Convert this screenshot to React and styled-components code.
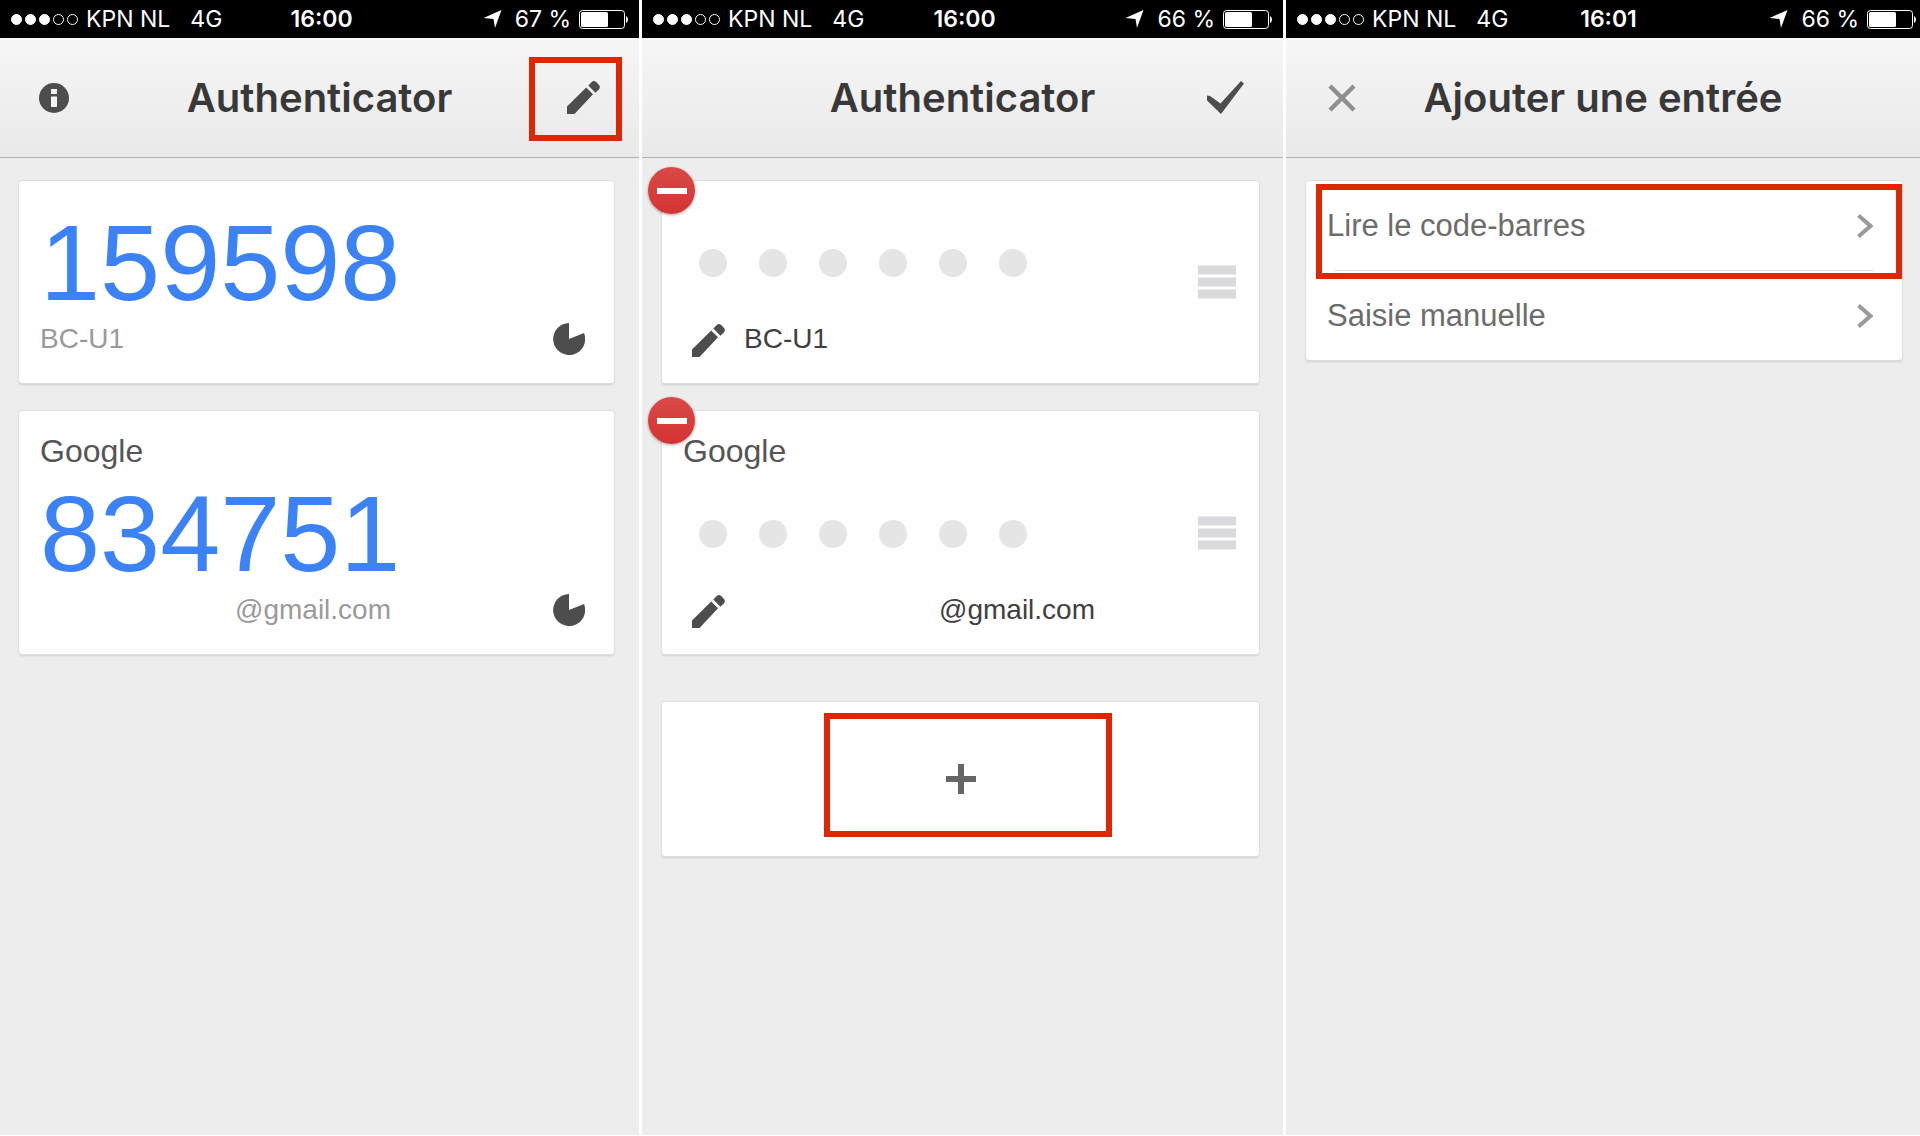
import React from 'react'
import styled, { createGlobalStyle } from 'styled-components'

const GlobalStyle = createGlobalStyle`
  * {
    box-sizing: border-box;
  }

  body {
    margin: 0;
    background-color: white;
    font-family: "Liberation Sans", Arial, sans-serif;
  }
`

const Page = styled.main`
  min-height: 100vh;
  padding-bottom: 1px;
  display: grid;
  grid-template-columns: 639fr 641fr 634fr;
  gap: 3px;
`

const Screen = styled.section`
  min-width: 0;
  display: flex;
  flex-direction: column;
  background-color: #ededed;
`

const StatusBar = styled.div`
  height: 38px;
  padding: 0 ${props => props.$edge}px 0 11px;
  display: grid;
  grid-template-columns: minmax(0, 1fr) auto minmax(0, 1fr);
  align-items: center;
  background-color: black;
  color: white;
  font-family: Inter, "Liberation Sans", sans-serif;
  font-size: 23px;
  line-height: 36px;
  white-space: nowrap;
`

const StatusGroup = styled.div`
  display: flex;
  align-items: center;
  justify-content: ${props => (props.$end ? 'flex-end' : 'flex-start')};
  gap: 8px;
`

const Signal = styled.div`
  display: flex;
  gap: 3px;
`

const SignalDot = styled.span`
  width: 11px;
  height: 11px;
  border: 1px solid white;
  border-radius: 50%;
  background-color: ${props => (props.$on ? 'white' : 'transparent')};
`

const Network = styled.span`
  margin-left: 12px;
`

const Time = styled.span`
  padding-left: 4px;
  font-weight: 600;
`

const Header = styled.header`
  height: 120px;
  padding: 0 39px;
  display: grid;
  grid-template-columns: 1fr auto 1fr;
  align-items: center;
  background: linear-gradient(#f6f6f6, #e9e9e9);
  border-bottom: 1px solid #b2b2b2;
`

const Title = styled.h1`
  grid-column: 2;
  margin: 0;
  color: #383838;
  font-family: Inter, "Liberation Sans", sans-serif;
  font-size: 40px;
  font-weight: 600;
  line-height: 48px;
`

const IconButton = styled.button`
  position: relative;
  padding: 0;
  display: flex;
  justify-self: ${props => (props.$end ? 'end' : 'start')};
  border: 0;
  background: none;
  color: ${props => props.$color || '#4d4d4d'};
  cursor: pointer;
`

const Content = styled.div`
  padding: 23px ${props => props.$edge}px 28px ${props => props.$start || 20}px;
  display: flex;
  flex-direction: column;
  gap: 28px;
`

const Card = styled.article`
  position: relative;
  padding: ${props => (props.$issuer ? 20 : 28)}px 21px 26px;
  border-radius: 3px;
  background-color: #fefefe;
  box-shadow: 0 0 1px 1px #dfdfdf, 0 2px 2px #cfcfcf;
`

const Issuer = styled.div`
  margin-bottom: 9px;
  color: #555;
  font-size: 32px;
  line-height: 40px;
`

const Code = styled.div`
  height: 108px;
  display: flex;
  align-items: center;
  color: #3b82f7;
  font-size: 108px;
  line-height: 108px;
`

const HiddenDigit = styled.span`
  width: 60px;
  display: flex;
  justify-content: center;

  &::before {
    content: '';
    width: 28px;
    height: 28px;
    border-radius: 50%;
    background-color: #e5e5e5;
  }
`

const Footer = styled.div`
  margin-top: 4px;
  padding-right: ${props => (props.$editing ? 0 : 8)}px;
  padding-left: ${props => (props.$editing ? 9 : 0)}px;
  display: flex;
  align-items: ${props => (props.$editing ? 'flex-end' : 'center')};
  gap: 19px;
`

const Account = styled.span`
  flex: 1;
  padding-left: ${props => (props.$masked ? 195 : 0)}px;
  color: ${props => (props.$editing ? '#404040' : '#9a9a9a')};
  font-size: 28px;
  line-height: 36px;
`

const RemoveButton = styled.button`
  position: absolute;
  top: -14px;
  left: -14px;
  width: 47px;
  height: 47px;
  padding: 0;
  display: flex;
  align-items: center;
  justify-content: center;
  border: 0;
  border-radius: 50%;
  background: linear-gradient(#d94a46, #d43333);
  box-shadow: 0 1px 3px rgba(0, 0, 0, 0.35);
  cursor: pointer;

  &::before {
    content: '';
    width: 30px;
    height: 6px;
    background-color: white;
  }
`

const DragHandle = styled.button`
  position: absolute;
  top: 50%;
  right: 23px;
  width: 38px;
  padding: 0;
  display: flex;
  flex-direction: column;
  gap: 3px;
  transform: translateY(-50%);
  border: 0;
  background: none;
  cursor: grab;
`

const HandleBar = styled.span`
  height: 9px;
  background-color: #d9d9de;
`

const AddButton = styled.button`
  position: relative;
  height: 154px;
  margin-top: 20px;
  display: flex;
  align-items: center;
  justify-content: center;
  border: 0;
  border-radius: 3px;
  background-color: #fefefe;
  box-shadow: 0 0 1px 1px #dfdfdf, 0 2px 2px #cfcfcf;
  color: #666;
  cursor: pointer;
`

const Menu = styled.nav`
  border-radius: 3px;
  background-color: #fefefe;
  box-shadow: 0 0 1px 1px #dfdfdf, 0 2px 2px #cfcfcf;
`

const MenuItem = styled.a`
  position: relative;
  height: 89px;
  padding: 0 29px 0 21px;
  display: flex;
  align-items: center;
  justify-content: space-between;
  color: #6c6c6c;
  font-size: 31px;
  line-height: 40px;
  text-decoration: none;
`

const Divider = styled.hr`
  height: 1px;
  margin: 0 29px;
  border: 0;
  background-color: #ddd;
`

// red frame drawn over the control the reader has to tap
const Highlight = styled.span`
  position: absolute;
  inset: ${props => props.$inset};
  border: 6px solid #df2603;
  pointer-events: none;
`

const LocationIcon = () => (
  <svg width="24" height="18" viewBox="0 0 24 18" fill="currentColor" aria-hidden="true">
    <path d="M18.500 0 12 18 10.500 9 0.500 8Z" />
  </svg>
)

const BatteryIcon = () => (
  <svg width="49" height="19" viewBox="0 0 49 19" fill="none" aria-hidden="true">
    <rect x="0.500" y="0.500" width="45" height="18" rx="3" stroke="currentColor" />
    <rect x="2" y="2" width="27" height="15" rx="1.500" fill="currentColor" />
    <path d="M47 6q2 1 2 3.500t-2 3.500z" fill="currentColor" />
  </svg>
)

const InfoIcon = () => (
  <svg width="30" height="30" viewBox="0 0 30 30" aria-hidden="true">
    <circle cx="15" cy="15" r="15" fill="currentColor" />
    <path d="M12 6h6v5h-6zM12 13.500h6v10.500h-6z" fill="#f2f2f2" />
  </svg>
)

const PencilIcon = () => (
  <svg width="33" height="33" viewBox="0 0 33 33" fill="currentColor" aria-hidden="true">
    <path d="M0 25.500 19.200 6.500 26 13.300 7.500 33H0z" />
    <path d="m21.300 4.500 3.200-3.300q2.500-2.200 4.900 0l2.400 2.500q2.200 2.400 0 4.800l-3.400 3.300z" />
  </svg>
)

const CheckIcon = () => (
  <svg width="37" height="33" viewBox="0 0 37 33" fill="currentColor" aria-hidden="true">
    <path d="M0 14.500v5L14 33 37 2.500 34 0 13.500 22.500 3 15z" />
  </svg>
)

const CloseIcon = () => (
  <svg width="32" height="28" viewBox="0 0 32 28" fill="none" aria-hidden="true">
    <path d="m5 2 24 24M29 2 5 26" stroke="currentColor" strokeWidth="4.500" />
  </svg>
)

const PieIcon = () => (
  <svg width="32" height="32" viewBox="0 0 32 32" aria-hidden="true">
    <path d="M16 16V0A16 16 0 1 0 31 10z" fill="#4d4d4d" />
  </svg>
)

const PlusIcon = () => (
  <svg width="30" height="30" viewBox="0 0 30 30" fill="currentColor" aria-hidden="true">
    <path d="M12 0h6v12h12v6H18v12h-6V18H0v-6h12z" />
  </svg>
)

const ChevronIcon = () => (
  <svg width="16" height="24" viewBox="0 0 16 24" fill="none" aria-hidden="true">
    <path d="m1.500 1.500 12 10.500-12 10.500" stroke="#999" strokeWidth="4" />
  </svg>
)

const Status = ({ time, battery, edge }) => (
  <StatusBar $edge={edge}>
    <StatusGroup>
      <Signal>
        {[1, 2, 3, 4, 5].map(n => (
          <SignalDot key={n} $on={n <= 3} />
        ))}
      </Signal>
      <span>KPN NL</span>
      <Network>4G</Network>
    </StatusGroup>
    <Time>{time}</Time>
    <StatusGroup $end>
      <LocationIcon />
      <span>{battery} %</span>
      <BatteryIcon />
    </StatusGroup>
  </StatusBar>
)

const accounts = [
  { code: '159598', name: 'BC-U1' },
  { code: '834751', name: '@gmail.com', issuer: 'Google', masked: true },
]

const AccountCard = ({ account, editing }) => (
  <Card $issuer={account.issuer}>
    {account.issuer && <Issuer>{account.issuer}</Issuer>}
    <Code>
      {editing
        ? account.code.split('').map((digit, i) => <HiddenDigit key={i} />)
        : account.code}
    </Code>
    <Footer $editing={editing}>
      {editing && (
        <IconButton aria-label="Modifier">
          <PencilIcon />
        </IconButton>
      )}
      <Account $masked={account.masked} $editing={editing}>{account.name}</Account>
      {!editing && <PieIcon />}
    </Footer>
    {editing && <RemoveButton aria-label="Supprimer" />}
    {editing && (
      <DragHandle aria-label="Déplacer">
        <HandleBar />
        <HandleBar />
        <HandleBar />
      </DragHandle>
    )}
  </Card>
)

export default () => {
  return (
    <>
      <GlobalStyle />
      <Page>
        <Screen>
          <Status time="16:00" battery={67} edge={11} />
          <Header>
            <IconButton aria-label="Informations">
              <InfoIcon />
            </IconButton>
            <Title>Authenticator</Title>
            <IconButton $end aria-label="Modifier">
              <PencilIcon />
              <Highlight $inset="-24px -22px -27px -38px" />
            </IconButton>
          </Header>
          <Content $start={19} $edge={25}>
            {accounts.map(account => (
              <AccountCard key={account.code} account={account} />
            ))}
          </Content>
        </Screen>

        <Screen>
          <Status time="16:00" battery={66} edge={11} />
          <Header>
            <Title>Authenticator</Title>
            <IconButton $end aria-label="Terminer">
              <CheckIcon />
            </IconButton>
          </Header>
          <Content $edge={24}>
            {accounts.map(account => (
              <AccountCard key={account.code} account={account} editing />
            ))}
            <AddButton aria-label="Ajouter">
              <PlusIcon />
              <Highlight $inset="11px 147px 19px 162px" />
            </AddButton>
          </Content>
        </Screen>

        <Screen>
          <Status time="16:01" battery={66} edge={4} />
          <Header>
            <IconButton $color="#8f8f8f" aria-label="Fermer">
              <CloseIcon />
            </IconButton>
            <Title>Ajouter une entrée</Title>
          </Header>
          <Content $edge={18}>
            <Menu>
              <MenuItem href="#code-barres">
                Lire le code-barres
                <ChevronIcon />
                <Highlight $inset="3px 0 -9px 10px" />
              </MenuItem>
              <Divider />
              <MenuItem href="#saisie">
                Saisie manuelle
                <ChevronIcon />
              </MenuItem>
            </Menu>
          </Content>
        </Screen>
      </Page>
    </>
  )
}
